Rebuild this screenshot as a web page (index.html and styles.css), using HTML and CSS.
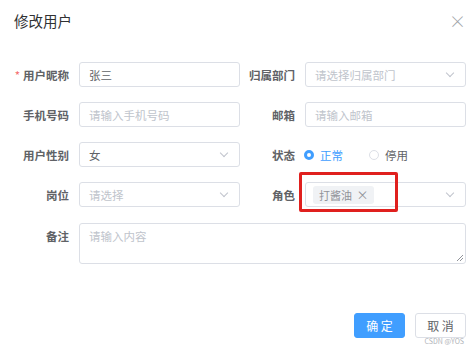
FILE: index.html
```html
<!DOCTYPE html>
<html lang="zh-CN">
<head>
    <meta charset="UTF-8">
    <title>修改用户</title>
    <link rel="stylesheet" href="styles.css">
</head>
<body>
    <div class="dialog">
        <div class="dialog-header">
            <span class="dialog-title">修改用户</span>
            <span class="dialog-close">&times;</span>
        </div>

        <div class="form">
            <div class="form-item">
                <label class="form-label"><span class="required">*</span>用户昵称</label>
                <div class="input"><span class="value">张三</span></div>
            </div>
            <div class="form-item">
                <label class="form-label">归属部门</label>
                <div class="input select"><span class="placeholder">请选择归属部门</span><span class="arrow"></span></div>
            </div>

            <div class="form-item">
                <label class="form-label">手机号码</label>
                <div class="input"><span class="placeholder">请输入手机号码</span></div>
            </div>
            <div class="form-item">
                <label class="form-label">邮箱</label>
                <div class="input"><span class="placeholder">请输入邮箱</span></div>
            </div>

            <div class="form-item">
                <label class="form-label">用户性别</label>
                <div class="input select"><span class="value">女</span><span class="arrow"></span></div>
            </div>
            <div class="form-item">
                <label class="form-label">状态</label>
                <div class="radio-group">
                    <span class="radio checked"><span class="radio-dot"></span>正常</span>
                    <span class="radio"><span class="radio-dot"></span>停用</span>
                </div>
            </div>

            <div class="form-item">
                <label class="form-label">岗位</label>
                <div class="input select"><span class="placeholder">请选择</span><span class="arrow"></span></div>
            </div>
            <div class="form-item">
                <label class="form-label">角色</label>
                <div class="input select">
                    <span class="tag">打酱油 <span class="tag-close">&times;</span></span>
                    <span class="arrow"></span>
                    <div class="highlight"></div>
                </div>
            </div>

            <div class="form-item wide">
                <label class="form-label">备注</label>
                <div class="input textarea"><span class="placeholder">请输入内容</span><span class="resize"></span></div>
            </div>
        </div>

        <div class="dialog-footer">
            <button class="btn primary">确 定</button>
            <button class="btn">取 消</button>
        </div>
        <span class="watermark">CSDN @YOS</span>
    </div>
</body>
</html>
```

FILE: styles.css
```css
/* General */
body {
    margin: 0;
    background-color: #ffffff;
    font-family: "Noto Sans CJK SC", "Liberation Sans", sans-serif;
    color: #606266;
}

.dialog {
    width: 474px;
    height: 346px;
    position: relative;
}

/* Header */
.dialog-header {
    display: flex;
    justify-content: space-between;
    align-items: center;
    padding: 8px 8px 0 14px;
    height: 24px;
}

.dialog-title {
    font-size: 14.5px;
    color: #303133;
}

.dialog-close {
    font-size: 17px;
    color: #a0a3a8;
    font-weight: 300;
}

/* Form */
.form {
    display: grid;
    grid-template-columns: 226px 226px;
    row-gap: 15px;
    padding: 30px 8px 0 14px;
}

.form-item {
    display: flex;
    align-items: center;
    height: 25px;
}

.form-item.wide {
    grid-column: span 2;
    align-items: flex-start;
    height: 41px;
    margin-top: 1px;
}

.form-label {
    width: 55px;
    flex: none;
    padding-right: 10px;
    text-align: right;
    white-space: nowrap;
    font-size: 11.5px;
    font-weight: bold;
    color: #606266;
    box-sizing: content-box;
}

.form-item.wide .form-label {
    line-height: 26px;
}

.required {
    color: #f56c6c;
    margin-right: 3px;
    font-weight: normal;
}

.input {
    flex: 1;
    height: 25px;
    border: 1px solid #dcdfe6;
    border-radius: 3px;
    box-sizing: border-box;
    display: flex;
    align-items: center;
    padding: 0 10px 0 9px;
    font-size: 11.5px;
    position: relative;
}

.value {
    color: #606266;
}

.placeholder {
    color: #c0c4cc;
}

.select .arrow {
    margin-left: auto;
    width: 5px;
    height: 5px;
    border-right: 1px solid #c0c4cc;
    border-bottom: 1px solid #c0c4cc;
    transform: rotate(45deg);
    margin-top: -3px;
    margin-right: 2px;
}

.textarea {
    height: 41px;
    align-items: flex-start;
    padding-top: 4px;
}

.resize {
    position: absolute;
    right: 2px;
    bottom: 2px;
    width: 6px;
    height: 6px;
    background: linear-gradient(135deg, transparent 45%, #909399 45%, #909399 55%, transparent 55%, transparent 70%, #909399 70%, #909399 80%, transparent 80%);
}

/* Radios */
.radio-group {
    display: flex;
    align-items: center;
    gap: 26px;
    font-size: 11.5px;
    margin-left: -1px;
}

.radio {
    display: flex;
    align-items: center;
    gap: 6px;
    color: #606266;
}

.radio-dot {
    width: 10px;
    height: 10px;
    border: 1px solid #dcdfe6;
    border-radius: 50%;
    box-sizing: border-box;
}

.radio.checked {
    color: #409eff;
}

.radio.checked .radio-dot {
    border: 3px solid #409eff;
    background-color: #ffffff;
}

/* Tag */
.tag {
    background-color: #f0f2f5;
    color: #909399;
    font-size: 11px;
    height: 18px;
    line-height: 18px;
    padding: 0 6px;
    border-radius: 3px;
    margin-left: -2px;
}

.tag-close {
    margin-left: 2px;
    font-size: 12px;
}

.highlight {
    position: absolute;
    left: -7px;
    top: -11px;
    width: 93px;
    height: 34px;
    border: 3px solid #e0201e;
    border-radius: 2px;
}

/* Footer */
.dialog-footer {
    display: flex;
    justify-content: flex-end;
    gap: 10px;
    padding: 49px 8px 0 0;
}

.btn {
    height: 25px;
    width: 51px;
    padding: 0;
    font-family: inherit;
    font-size: 12px;
    border: 1px solid #dcdfe6;
    border-radius: 3px;
    background-color: #ffffff;
    color: #606266;
}

.btn.primary {
    background-color: #409eff;
    border-color: #409eff;
    color: #ffffff;
}

.watermark {
    position: absolute;
    right: 10px;
    bottom: 0;
    font-size: 7px;
    line-height: 9px;
    color: #b0b3b8;
}
```
